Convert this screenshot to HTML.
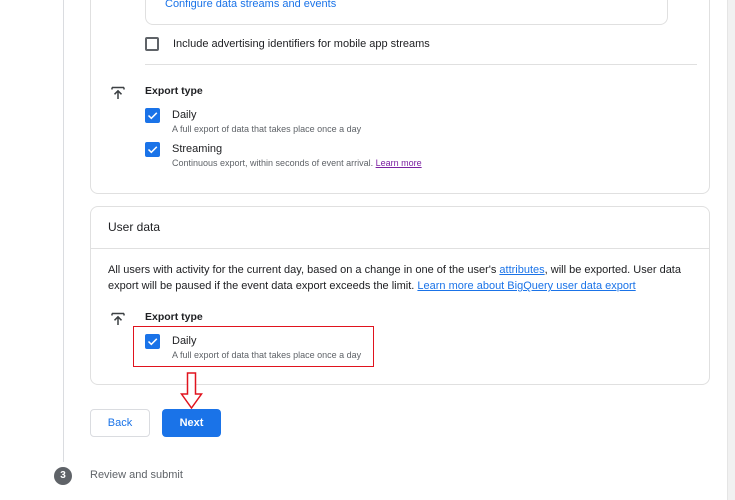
<!DOCTYPE html>
<html><head><meta charset="utf-8"><style>
*{margin:0;padding:0;box-sizing:border-box}
body{width:735px;height:500px;overflow:hidden;background:#fff;font-family:"Liberation Sans",Arial,sans-serif;color:#202124;position:relative}
.a{position:absolute;white-space:nowrap}
.card{position:absolute;border:1px solid #e0e0e0;border-radius:8px;background:#fff}
.cb{position:absolute;width:15px;height:15px;border-radius:2px;background:#1a73e8}
.cb svg{position:absolute;left:0;top:0}
.t{font-size:11px;color:#202124}
.s{font-size:9px;color:#5f6368}
a{color:#1a73e8}
</style></head><body>
<div class="a" style="left:63px;top:0;width:1px;height:462px;background:#dadce0"></div>
<div class="a" style="left:727px;top:0;width:8px;height:500px;background:#f1f1f1;border-left:1px solid #e5e5e5"></div>

<div class="card" style="left:90px;top:-10px;width:620px;height:204px"></div>
<div class="card" style="left:145px;top:-10px;width:523px;height:35px"></div>
<div class="a" style="left:165px;top:-2px;font-size:11px;color:#1a73e8">Configure data streams and events</div>
<div class="a" style="left:145px;top:37px;width:14px;height:14px;border:2px solid #5f6368;border-radius:2px"></div>
<div class="a t" style="left:173px;top:38px">Include advertising identifiers for mobile app streams</div>
<div class="a" style="left:145px;top:64px;width:552px;height:1px;background:#e0e0e0"></div>

<svg class="a" style="left:111px;top:86px" width="14" height="14" viewBox="0 0 14 14"><path d="M1 1.5h12M1 1.5v2M13 1.5v2M7 13V5M3.5 8.3L7 4.8l3.5 3.5" stroke="#3c4043" stroke-width="1.5" fill="none"/></svg>
<div class="a" style="left:145px;top:85px;font-size:10.5px;font-weight:bold;color:#202124">Export type</div>
<div class="cb" style="left:145px;top:108px"><svg width="15" height="15"><path d="M3.5 7.5l2.8 2.8 5.5-5.5" stroke="#fff" stroke-width="1.5" fill="none"/></svg></div>
<div class="a t" style="left:172px;top:109px">Daily</div>
<div class="a s" style="left:172px;top:124px">A full export of data that takes place once a day</div>
<div class="cb" style="left:145px;top:142px"><svg width="15" height="15"><path d="M3.5 7.5l2.8 2.8 5.5-5.5" stroke="#fff" stroke-width="1.5" fill="none"/></svg></div>
<div class="a t" style="left:172px;top:143px">Streaming</div>
<div class="a s" style="left:172px;top:158px">Continuous export, within seconds of event arrival. <a style="color:#7b1fa2;text-decoration:underline">Learn more</a></div>

<div class="card" style="left:90px;top:206px;width:620px;height:179px"></div>
<div class="a" style="left:91px;top:248px;width:618px;height:1px;background:#e0e0e0"></div>
<div class="a" style="left:108px;top:220px;font-size:12px;color:#202124">User data</div>
<div class="a" style="left:108px;top:262px;font-size:11px;line-height:16px;color:#202124">All users with activity for the current day, based on a change in one of the user's <a style="text-decoration:underline">attributes</a>, will be exported. User data<br>export will be paused if the event data export exceeds the limit. <a style="text-decoration:underline">Learn more about BigQuery user data export</a></div>
<svg class="a" style="left:111px;top:312px" width="14" height="14" viewBox="0 0 14 14"><path d="M1 1.5h12M1 1.5v2M13 1.5v2M7 13V5M3.5 8.3L7 4.8l3.5 3.5" stroke="#3c4043" stroke-width="1.5" fill="none"/></svg>
<div class="a" style="left:145px;top:311px;font-size:10.5px;font-weight:bold;color:#202124">Export type</div>
<div class="a" style="left:133px;top:326px;width:241px;height:41px;border:1.5px solid #e0131e"></div>
<div class="cb" style="left:145px;top:334px"><svg width="15" height="15"><path d="M3.5 7.5l2.8 2.8 5.5-5.5" stroke="#fff" stroke-width="1.5" fill="none"/></svg></div>
<div class="a t" style="left:172px;top:335px">Daily</div>
<div class="a s" style="left:172px;top:350px">A full export of data that takes place once a day</div>

<svg class="a" style="left:180px;top:372px" width="24" height="38" viewBox="0 0 24 38"><path d="M7.5 1h8v21h6L11.5 36 1.5 22h6z" fill="#fff" stroke="#e0131e" stroke-width="1.5"/></svg>

<div class="a" style="left:90px;top:409px;width:60px;height:28px;border:1px solid #dadce0;border-radius:4px;font-size:11px;color:#1a73e8;text-align:center;line-height:26px">Back</div>
<div class="a" style="left:162px;top:409px;width:59px;height:28px;background:#1a73e8;border-radius:4px;font-size:11px;font-weight:bold;color:#fff;text-align:center;line-height:28px">Next</div>

<div class="a" style="left:54px;top:467px;width:18px;height:18px;border-radius:50%;background:#5f6368;color:#fff;font-size:10px;font-weight:bold;text-align:center;line-height:18px">3</div>
<div class="a" style="left:90px;top:469px;font-size:11px;color:#5f6368">Review and submit</div>
</body></html>
